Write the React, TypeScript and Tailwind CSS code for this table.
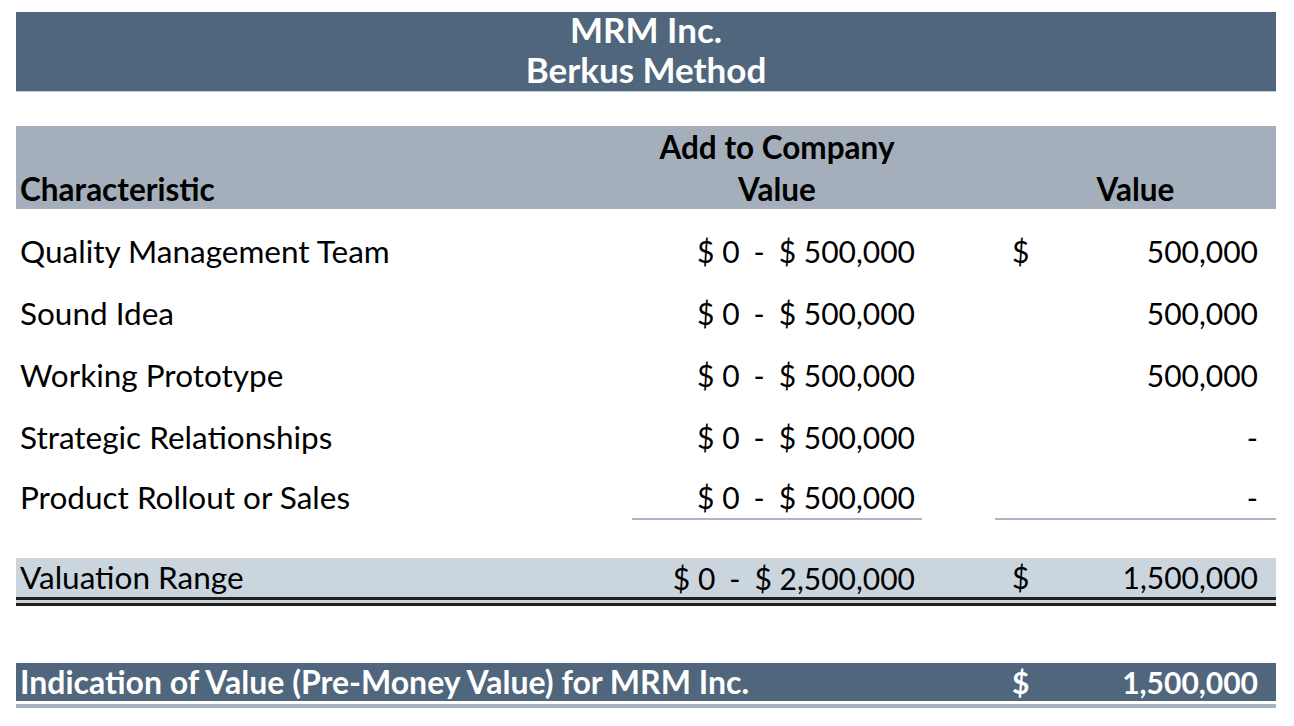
import React from "react";

const rows = [
  { name: "Quality Management Team", value: "500,000", dollar: true },
  { name: "Sound Idea", value: "500,000" },
  { name: "Working Prototype", value: "500,000" },
  { name: "Strategic Relationships", value: "-" },
  { name: "Product Rollout or Sales", value: "-" },
];

function Range({ high }: { high: string }) {
  return (
    <div className="flex justify-end items-center pr-[7px]">
      <span>$ 0</span>
      <span className="mx-[14px]">-</span>
      <span>$ {high}</span>
    </div>
  );
}

export default function App() {
  return (
    <div
      className="w-[1294px] h-[726px] bg-white text-black px-[16px] pt-[12px] text-[30px]"
      style={{ fontFamily: "Lato, 'Open Sans', sans-serif" }}
    >
      <div className="w-[1260px]">
        {/* title */}
        <div className="h-[80px] bg-[#4f667c] border-b border-[#c3cbd3] flex flex-col items-center pt-[-2px] text-white font-bold leading-[40px] text-[35px]">
          <div className="-mt-[3px]">MRM Inc.</div>
          <div>Berkus Method</div>
        </div>

        {/* header */}
        <div className="mt-[34px] h-[83px] bg-[#a4afbb] grid grid-cols-[616px_290px_73px_281px] font-bold leading-[42px] text-[31.5px]">
          <div className="flex items-end pl-[4px]">Characteristic</div>
          <div className="flex flex-col items-center">
            <div>Add to Company</div>
            <div>Value</div>
          </div>
          <div />
          <div className="flex items-end justify-center">Value</div>
        </div>

        {/* rows */}
        <div className="mt-[11px]">
          {rows.map((r, i) => {
            const last = i === rows.length - 1;
            return (
              <div
                key={r.name}
                className={
                  last
                    ? "h-[50px] grid grid-cols-[616px_290px_73px_281px] leading-[38px] pt-[10px]"
                    : "h-[62px] grid grid-cols-[616px_290px_73px_281px] items-center leading-[38px]"
                }
              >
                <div className="pl-[4px] text-[31.5px]">{r.name}</div>
                <div className={last ? "border-b-2 border-[#a9b6c6] pb-[2px]" : ""}>
                  <Range high="500,000" />
                </div>
                <div />
                <div className={last ? "flex justify-between border-b-2 border-[#a9b6c6] pb-[2px] pl-[17px] pr-[18px]" : "flex justify-between pl-[17px] pr-[18px]"}>
                  <span>{r.dollar ? "$" : ""}</span>
                  <span>{r.value}</span>
                </div>
              </div>
            );
          })}
        </div>

        {/* valuation range */}
        <div className="mt-[40px] h-[48px] bg-[#cbd5dd] border-b-[9px] border-double border-[#1f1f1f] grid grid-cols-[616px_290px_73px_281px] leading-[38px]">
          <div className="pl-[4px] text-[31.5px]">Valuation Range</div>
          <Range high="2,500,000" />
          <div />
          <div className="flex justify-between pl-[17px] pr-[18px]">
            <span>$</span>
            <span>1,500,000</span>
          </div>
        </div>

        {/* indication of value */}
        <div className="mt-[57px] h-[38px] bg-[#4f667c] grid grid-cols-[616px_290px_73px_281px] leading-[38px] font-bold text-white">
          <div className="pl-[4px] col-span-3 whitespace-nowrap text-[32px]">Indication of Value (Pre-Money Value) for MRM Inc.</div>
          <div className="flex justify-between pl-[17px] pr-[18px]">
            <span>$</span>
            <span>1,500,000</span>
          </div>
        </div>
        <div className="mt-[3px] h-[4px] bg-[#a7b3bf]" />
      </div>
    </div>
  );
}
